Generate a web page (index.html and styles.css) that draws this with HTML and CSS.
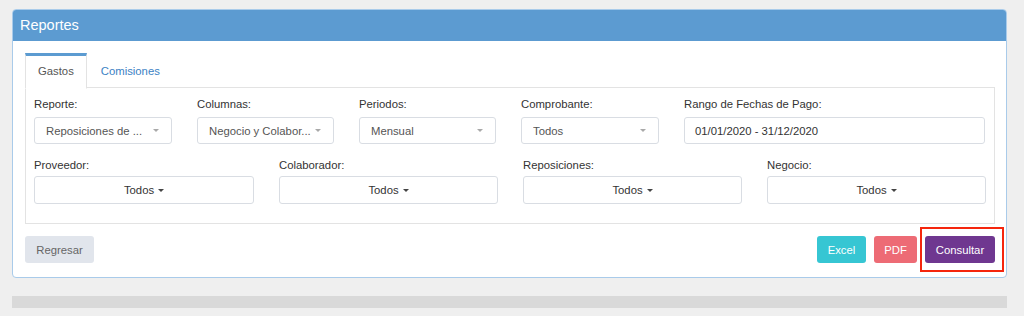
FILE: index.html
```html
<!DOCTYPE html>
<html lang="es">
<head>
<meta charset="utf-8">
<title>Reportes</title>
<link rel="stylesheet" href="styles.css">
</head>
<body>
<div class="page">
  <div class="panel">
    <div class="panel-head">Reportes</div>
    <div class="panel-body">
      <ul class="tabs">
        <li class="tab active">Gastos</li>
        <li class="tab">Comisiones</li>
      </ul>
      <div class="tab-content">
        <div class="row row-top">
          <div class="field">
            <label>Reporte:</label>
            <div class="select"><span class="sel-text">Reposiciones de ...</span><i class="caret-s"></i></div>
          </div>
          <div class="field">
            <label>Columnas:</label>
            <div class="select"><span class="sel-text">Negocio y Colabor...</span><i class="caret-s"></i></div>
          </div>
          <div class="field">
            <label>Periodos:</label>
            <div class="select"><span class="sel-text">Mensual</span><i class="caret-s"></i></div>
          </div>
          <div class="field">
            <label>Comprobante:</label>
            <div class="select"><span class="sel-text">Todos</span><i class="caret-s"></i></div>
          </div>
          <div class="field">
            <label>Rango de Fechas de Pago:</label>
            <div class="input">01/01/2020 - 31/12/2020</div>
          </div>
        </div>
        <div class="row row-bottom">
          <div class="field">
            <label>Proveedor:</label>
            <div class="multi">Todos <i class="caret"></i></div>
          </div>
          <div class="field">
            <label>Colaborador:</label>
            <div class="multi">Todos <i class="caret"></i></div>
          </div>
          <div class="field">
            <label>Reposiciones:</label>
            <div class="multi">Todos <i class="caret"></i></div>
          </div>
          <div class="field">
            <label>Negocio:</label>
            <div class="multi">Todos <i class="caret"></i></div>
          </div>
        </div>
      </div>
      <div class="actions">
        <button class="btn btn-back">Regresar</button>
        <div class="actions-right">
          <button class="btn btn-excel">Excel</button>
          <button class="btn btn-pdf">PDF</button>
          <span class="highlight"><button class="btn btn-query">Consultar</button></span>
        </div>
      </div>
    </div>
  </div>
  <div class="bar"></div>
</div>
</body>
</html>
```

FILE: styles.css
```css
* { box-sizing: border-box; }
html, body { margin: 0; padding: 0; }
body {
  background: #efefef;
  font-family: "Liberation Sans", Arial, sans-serif;
  font-size: 11.3px;
  color: #333;
}
.page {
  padding: 9px 17px 0 12px;
}
.panel {
  background: #fff;
  border: 1px solid #a9cbea;
  border-radius: 4px;
  overflow: hidden;
}
.panel-head {
  background: #5c9bd1;
  color: #fff;
  font-size: 14.5px;
  height: 32px;
  line-height: 32px;
  padding-left: 8px;
  margin: -1px -1px 0 -1px;
  border-radius: 4px 4px 0 0;
}
.panel-body {
  padding: 12px 11px 14px 12px;
}
.tabs {
  list-style: none;
  margin: 0;
  padding: 0;
  display: flex;
  border-bottom: 1px solid #e3e3e3;
  height: 35px;
}
.tab {
  padding: 0 13px 0 14px;
  line-height: 33px;
  color: #3b82c4;
  border-top: 2px solid transparent;
}
.tab.active {
  color: #555;
  background: #fff;
  border: 1px solid #e3e3e3;
  border-top: 3px solid #5c9bd1;
  border-bottom-color: #fff;
  height: 36px;
  line-height: 31px;
  padding: 0 12px;
}
.tab-content {
  border: 1px solid #e3e3e3;
  border-top: none;
  padding: 10px 8px 19px 8px;
}
.row {
  display: grid;
  column-gap: 25px;
}
.row-top {
  grid-template-columns: 138px 137px 137px 138px 301px;
}
.row-bottom {
  grid-template-columns: 220px 219px 219px 219px;
  margin-top: 15px;
}
label {
  display: block;
  line-height: 13px;
  color: #333;
  margin-bottom: 6px;
}
.row-bottom label {
  margin-bottom: 4px;
}
.select, .input {
  height: 27px;
  border: 1px solid #d9dde3;
  border-radius: 3px;
  display: flex;
  align-items: center;
  color: #555;
}
.select {
  padding: 0 12px 0 11px;
}
.sel-text {
  flex: 1;
  min-width: 0;
  white-space: nowrap;
  overflow: hidden;
}
.caret-s {
  flex: none;
  width: 0;
  height: 0;
  border-top: 3px solid #a9a9a9;
  border-left: 3px solid transparent;
  border-right: 3px solid transparent;
}
.input {
  padding: 0 10px;
  color: #333;
}
.multi {
  height: 28px;
  border: 1px solid #d9dde3;
  border-radius: 3px;
  display: flex;
  align-items: center;
  justify-content: center;
  color: #333;
}
.caret {
  display: inline-block;
  width: 0;
  height: 0;
  margin-left: 4px;
  border-top: 3px solid #444;
  border-left: 3px solid transparent;
  border-right: 3px solid transparent;
}
.actions {
  display: flex;
  justify-content: space-between;
  margin-top: 12px;
}
.actions-right {
  display: flex;
  gap: 8px;
}
.btn {
  height: 27px;
  border: none;
  border-radius: 3px;
  font-family: "Liberation Sans", Arial, sans-serif;
  font-size: 11.3px;
  color: #fff;
  padding: 0;
  cursor: pointer;
}
.btn-back {
  width: 69px;
  background: #e1e5ec;
  color: #666;
}
.btn-excel {
  width: 49px;
  background: #36c6d3;
}
.btn-pdf {
  width: 43px;
  background: #ed6b75;
}
.btn-query {
  width: 70px;
  background: #6f3790;
  display: block;
}
.highlight {
  position: relative;
  display: block;
}
.highlight::after {
  content: "";
  position: absolute;
  top: -9px;
  bottom: -9px;
  left: -5px;
  right: -9px;
  border: 2px solid #f5260d;
  pointer-events: none;
}
.bar {
  height: 12px;
  background: #d9d9d9;
  margin-top: 18px;
}
```
